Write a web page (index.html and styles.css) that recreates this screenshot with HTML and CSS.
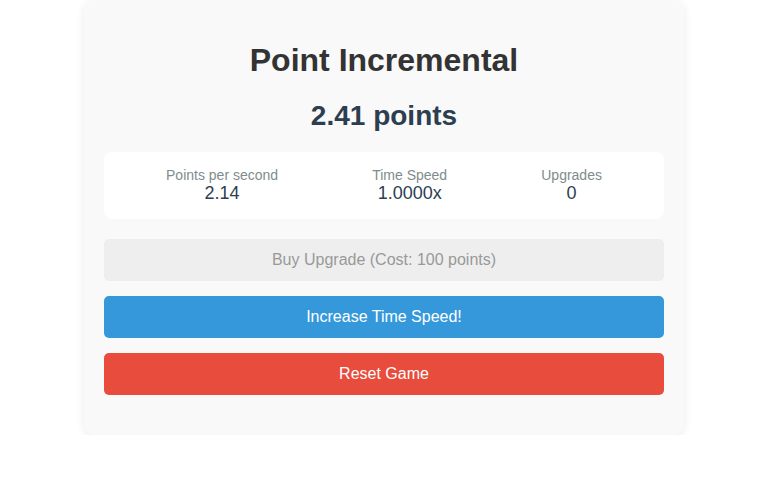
FILE: index.html
```html
<!DOCTYPE html>
<html lang="en">
<head>
  <meta charset="UTF-8">
  <title>Point Incremental</title>
  <link rel="stylesheet" href="styles.css">
</head>
<body>
  <div class="game-box">
    <h1>Point Incremental</h1>
    <div class="points"><span id="points">2.41</span> points</div>

    <div class="stats">
      <div class="stat">
        <div class="stat-label">Points per second</div>
        <div class="stat-value" id="pps">2.14</div>
      </div>
      <div class="stat">
        <div class="stat-label">Time Speed</div>
        <div class="stat-value" id="speed">1.0000x</div>
      </div>
      <div class="stat">
        <div class="stat-label">Upgrades</div>
        <div class="stat-value" id="upgrades">0</div>
      </div>
    </div>

    <div class="actions">
      <button class="btn btn-upgrade" disabled>Buy Upgrade (Cost: 100 points)</button>
      <button class="btn btn-speed">Increase Time Speed!</button>
      <button class="btn btn-reset">Reset Game</button>
    </div>
  </div>
</body>
</html>
```

FILE: styles.css
```css
body {
  font-family: "Liberation Sans", Arial, sans-serif;
  background-color: #fff;
  margin: 0;
}

.game-box {
  max-width: 560px;
  margin: 0 auto;
  padding: 42px 20px 40px;
  background: #f9f9f9;
  border-radius: 10px;
  box-shadow: 0 2px 10px rgba(0, 0, 0, 0.08);
  text-align: center;
}

h1 {
  margin: 0 0 21px;
  font-size: 32px;
  line-height: 37px;
  color: #333;
}

.points {
  font-size: 28px;
  line-height: 32px;
  font-weight: bold;
  color: #2c3e50;
  margin-bottom: 20px;
}

.stats {
  display: flex;
  justify-content: space-around;
  background: #fff;
  padding: 15px;
  border-radius: 8px;
}

.stat-label {
  font-size: 14px;
  line-height: 16px;
  color: #7f8c8d;
}

.stat-value {
  font-size: 18px;
  line-height: 21px;
  color: #2c3e50;
}

.actions {
  display: flex;
  flex-direction: column;
  gap: 15px;
  margin-top: 20px;
}

.btn {
  font-family: inherit;
  font-size: 16px;
  line-height: 18px;
  padding: 12px;
  border: none;
  border-radius: 5px;
  color: #fff;
  cursor: pointer;
}

.btn-upgrade {
  background: #eee;
  color: #999;
  cursor: not-allowed;
}

.btn-speed {
  background: #3498db;
}

.btn-reset {
  background: #e74c3c;
}
```
